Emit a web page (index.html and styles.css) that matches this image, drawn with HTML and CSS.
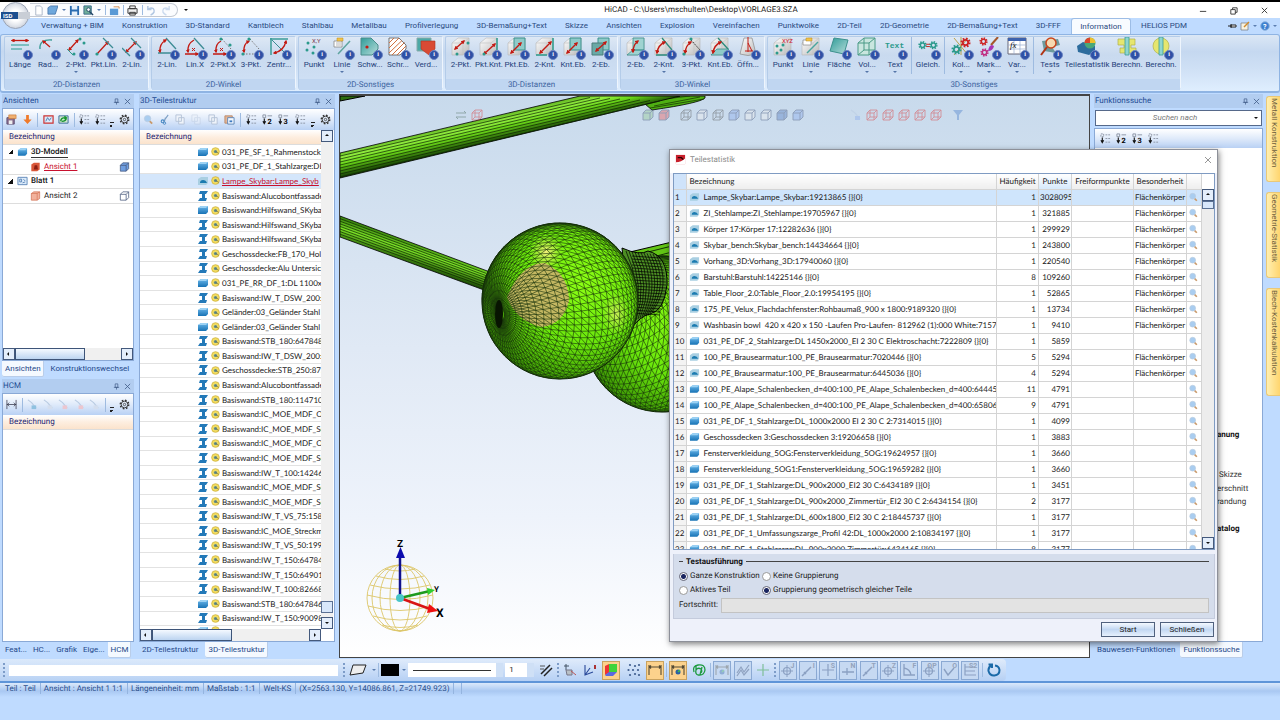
FILE: index.html
```html
<!DOCTYPE html>
<html lang="de">
<head>
<meta charset="utf-8">
<title>HiCAD</title>
<link rel="stylesheet" href="styles.css">
</head>
<body>
<svg class="defs" aria-hidden="true">
  <defs>
    <linearGradient id="g-blue" x1="0" y1="0" x2="0" y2="1"><stop offset="0" stop-color="#6bb7ea"/><stop offset="1" stop-color="#1873b5"/></linearGradient>
    <linearGradient id="g-grey" x1="0" y1="0" x2="1" y2="1"><stop offset="0" stop-color="#fff"/><stop offset="1" stop-color="#b9b9b9"/></linearGradient>
    <linearGradient id="g-teal" x1="0" y1="0" x2="1" y2="1"><stop offset="0" stop-color="#2f9c98"/><stop offset="1" stop-color="#b7dcdb"/></linearGradient>
    <marker id="ah" viewBox="0 0 6 6" refX="4" refY="3" markerWidth="3" markerHeight="3" orient="auto-start-reverse"><path d="M0 0L6 3L0 6Z" fill="#c21a12"/></marker>
  </defs>
  <symbol id="cube-g" viewBox="0 0 20 20"><path d="M1 6L7 1H18V13L12 18H1Z" fill="url(#g-grey)" stroke="#b5b5b5" stroke-width=".6"/><path d="M1 6H12V18M12 6L18 1" fill="none" stroke="#c4c4c4" stroke-width=".7"/></symbol>
  <symbol id="gear" viewBox="0 0 10 10"><circle cx="5" cy="5" r="3.6" fill="none" stroke="currentColor" stroke-width="2" stroke-dasharray="1.5 1.3"/><circle cx="5" cy="5" r="2.4" fill="none" stroke="currentColor" stroke-width="1.6"/></symbol>
  <symbol id="i-len" viewBox="0 0 20 20"><path d="M2 3.500H18" stroke="#c21a12" stroke-width="1.300" marker-start="url(#ah)" marker-end="url(#ah)"/><path d="M1 8H19M1 12H12" stroke="#5fb3b1" stroke-width="1.600"/></symbol>
  <symbol id="i-rad" viewBox="0 0 20 20"><path d="M2 12Q1 2 14 3" fill="none" stroke="#3c9c98" stroke-width="1.400"/><path d="M12 10L5 4" stroke="#c21a12" stroke-width="1.300" marker-end="url(#ah)"/></symbol>
  <symbol id="i-2pkt" viewBox="0 0 20 20"><path d="M3 13L12 3" stroke="#c21a12" stroke-width="1.300" marker-start="url(#ah)" marker-end="url(#ah)"/><circle cx="14" cy="2" r="1.500" fill="#2b9a8c"/><circle cx="18" cy="6" r="1.500" fill="#2b9a8c"/><circle cx="8" cy="17" r="1.500" fill="#2b9a8c"/><path d="M1 12L7 18" stroke="#2b9a8c"/></symbol>
  <symbol id="i-pktlin" viewBox="0 0 20 20"><path d="M3 17L14 5" stroke="#c21a12" stroke-width="1.300" marker-end="url(#ah)"/><circle cx="3" cy="17" r="1.600" fill="#2b9a8c"/><path d="M9 1L19 11" stroke="#3c8c94" stroke-width="1.300"/></symbol>
  <symbol id="i-2lin" viewBox="0 0 20 20"><path d="M4 15L14 5" stroke="#c21a12" stroke-width="1.300" marker-start="url(#ah)" marker-end="url(#ah)"/><path d="M9 1L19 11M0 11L8 19" stroke="#3c8c94" stroke-width="1.300"/></symbol>
  <symbol id="i-w2lin" viewBox="0 0 20 20"><path d="M9 1L19 12M1 16H14" stroke="#3c8c94" stroke-width="1.300"/><path d="M3 15Q2 7 9 3" fill="none" stroke="#c21a12" stroke-width="1.300" marker-start="url(#ah)" marker-end="url(#ah)"/></symbol>
  <symbol id="i-wlinx" viewBox="0 0 20 20"><path d="M9 1L19 12" stroke="#3c8c94" stroke-width="1.300"/><path d="M3 15Q2 7 9 3M0 17H13" fill="none" stroke="#c21a12" stroke-width="1.300" marker-start="url(#ah)" marker-end="url(#ah)"/><path d="M7 11L10 14M10 11L7 14" stroke="#c21a12"/></symbol>
  <symbol id="i-w2pktx" viewBox="0 0 20 20"><path d="M9 2L18 12" stroke="#777" stroke-dasharray="1.500 1.500"/><path d="M3 15Q2 7 8 4M0 17H13" fill="none" stroke="#c21a12" stroke-width="1.300" marker-start="url(#ah)" marker-end="url(#ah)"/><path d="M7 11L10 14M10 11L7 14" stroke="#c21a12"/><circle cx="8" cy="2" r="1.600" fill="#2b9a8c"/><circle cx="17" cy="8" r="1.600" fill="#2b9a8c"/></symbol>
  <symbol id="i-w3pkt" viewBox="0 0 20 20"><path d="M9 2L18 12M2 17H13" stroke="#777" stroke-dasharray="1.500 1.500"/><path d="M3 15Q2 7 8 4" fill="none" stroke="#c21a12" stroke-width="1.300" marker-start="url(#ah)" marker-end="url(#ah)"/><circle cx="8" cy="2" r="1.600" fill="#2b9a8c"/><circle cx="2" cy="17" r="1.600" fill="#2b9a8c"/></symbol>
  <symbol id="i-zentr" viewBox="0 0 20 20"><path d="M1 2H19M2 1V18" stroke="#3c9c98" stroke-width="1.500"/><path d="M3 3L16 16" stroke="#3c8c94"/><path d="M5 16Q15 14 17 4" fill="none" stroke="#c21a12" stroke-width="1.300" marker-start="url(#ah)" marker-end="url(#ah)"/></symbol>
  <symbol id="i-punkt" viewBox="0 0 20 20"><g fill="#2b9a8c"><circle cx="4" cy="6" r="1.500"/><circle cx="10" cy="10" r="1.500"/><circle cx="3" cy="13" r="1.500"/><circle cx="9" cy="16" r="1.500"/></g></symbol>
  <symbol id="i-linie" viewBox="0 0 20 20"><path d="M6 17L18 4" stroke="#5fa5a0" stroke-width="1.500"/><path d="M2 4H10V10H2Z" fill="#fff" stroke="#888" stroke-width=".8"/><path d="M4 6H9M4 8H9" stroke="#999" stroke-width=".7"/><path d="M5 1H11V4H5Z" fill="#f2c34b" stroke="#b48a20" stroke-width=".5"/></symbol>
  <symbol id="i-schw" viewBox="0 0 20 20"><path d="M1 1H11L18 8V12L12 18H1Z" fill="url(#g-teal)" stroke="#4a8d8c"/><circle cx="7" cy="10" r="1.600" fill="#c21a12"/></symbol>
  <symbol id="i-schr" viewBox="0 0 20 20"><path d="M1 1H11L18 8V12L12 18H1Z" fill="#fff" stroke="#555" stroke-width=".8"/><path d="M1 6L6 1M1 11L11 1M1 16L14 3.500M4 18L16.500 5.500M9 18L18 9" stroke="#cf7040"/></symbol>
  <symbol id="i-verd" viewBox="0 0 20 20"><path d="M1 1H15V14H1Z" fill="#4ca9a6" stroke="#8aa"/><path d="M5 4H19V12L13 18L5 12Z" fill="#d94a34" stroke="#ad3322" stroke-width=".6"/></symbol>
  <symbol id="i-c2pkt" viewBox="0 0 20 20"><use href="#cube-g"/><path d="M4 12L13 4" stroke="#c21a12" stroke-width="1.400" marker-start="url(#ah)" marker-end="url(#ah)"/><circle cx="17" cy="6" r="1.500" fill="#2b9a8c"/><circle cx="6" cy="17" r="1.500" fill="#2b9a8c"/></symbol>
  <symbol id="i-cpk" viewBox="0 0 20 20"><use href="#cube-g"/><path d="M18 1V13" stroke="#2b9a8c" stroke-width="1.500"/><path d="M5 17L16 7" stroke="#c21a12" stroke-width="1.400" marker-start="url(#ah)" marker-end="url(#ah)"/><circle cx="5" cy="17" r="1.500" fill="#2b9a8c"/></symbol>
  <symbol id="i-cpe" viewBox="0 0 20 20"><use href="#cube-g"/><path d="M7 1H18V13H7Z" fill="#8fcac8" stroke="#3d918e"/><path d="M4 16L14 6" stroke="#c21a12" stroke-width="1.400" marker-start="url(#ah)" marker-end="url(#ah)"/></symbol>
  <symbol id="i-c2k" viewBox="0 0 20 20"><use href="#cube-g"/><path d="M18 1V13M1 18H12" stroke="#2b9a8c" stroke-width="1.500"/><path d="M5 16L16 5" stroke="#c21a12" stroke-width="1.400" marker-start="url(#ah)" marker-end="url(#ah)"/></symbol>
  <symbol id="i-c2e" viewBox="0 0 20 20"><path d="M7 1H18V13H7Z" fill="#8fcac8" stroke="#3d918e"/><path d="M1 6H12V18H1Z" fill="#6aa9a6" stroke="#4d7d7b"/><path d="M5 14L15 5" stroke="#c21a12" stroke-width="1.400" marker-start="url(#ah)" marker-end="url(#ah)"/></symbol>
  <symbol id="i-a2e" viewBox="0 0 20 20"><use href="#cube-g"/><path d="M7 1H18V13H7ZM1 18L7 13H18L12 18Z" fill="#9fd3d1" stroke="#3d918e" stroke-width=".8"/><path d="M7 15Q7 8 12 4" fill="none" stroke="#c21a12" stroke-width="1.400" marker-start="url(#ah)" marker-end="url(#ah)"/></symbol>
  <symbol id="i-a2k" viewBox="0 0 20 20"><use href="#cube-g"/><path d="M8 1L18 13M2 18H14" stroke="#2b8a7c" stroke-width="1.300"/><path d="M3 16Q4 8 11 5" fill="none" stroke="#c21a12" stroke-width="1.400" marker-start="url(#ah)" marker-end="url(#ah)"/></symbol>
  <symbol id="i-a3p" viewBox="0 0 20 20"><use href="#cube-g"/><path d="M9 3L18 13" stroke="#333" stroke-dasharray="1.500 1"/><path d="M3 16Q4 8 9 5" fill="none" stroke="#c21a12" stroke-width="1.400" marker-start="url(#ah)" marker-end="url(#ah)"/><circle cx="9" cy="2" r="1.600" fill="#2b9a8c"/><circle cx="2" cy="17" r="1.600" fill="#2b9a8c"/></symbol>
  <symbol id="i-ake" viewBox="0 0 20 20"><use href="#cube-g"/><path d="M1 18L7 12H19L13 18Z" fill="#8fcac8" stroke="#3d918e" stroke-width=".8"/><path d="M8 1L18 12" stroke="#2b8a7c" stroke-width="1.300"/><path d="M3 16Q4 8 11 5" fill="none" stroke="#c21a12" stroke-width="1.400" marker-start="url(#ah)" marker-end="url(#ah)"/></symbol>
  <symbol id="i-oeff" viewBox="0 0 20 20"><path d="M6 1H14L18 17Q10 20 2 17Z" fill="url(#g-grey)" stroke="#888" stroke-width=".7"/><path d="M10 0V15M10 6L14 14M7 14H15" stroke="#c21a12" fill="none"/></symbol>
  <symbol id="i-p3" viewBox="0 0 20 20"><use href="#cube-g"/><g fill="#2b9a8c"><circle cx="4" cy="9" r="1.500"/><circle cx="8" cy="13" r="1.500"/><circle cx="4" cy="16" r="1.500"/><circle cx="10" cy="8" r="1.500"/></g></symbol>
  <symbol id="i-l3" viewBox="0 0 20 20"><use href="#cube-g"/><path d="M6 16L17 5" stroke="#4aa59f" stroke-width="1.500"/><path d="M2 3H10V8H2Z" fill="#fff" stroke="#888" stroke-width=".7"/><path d="M5 1H11V4H5Z" fill="#f2c34b" stroke="#b48a20" stroke-width=".5"/></symbol>
  <symbol id="i-fl" viewBox="0 0 20 20"><path d="M5 1L19 3L15 17L1 14Z" fill="url(#g-teal)" stroke="#3d918e"/></symbol>
  <symbol id="i-vol" viewBox="0 0 20 20"><path d="M1 6L7 1H18V13L12 18H1Z" fill="#c9e6df" stroke="#4a9a86"/><path d="M1 6H12V18M12 6L18 1M7 1V13H18M7 13L1 18" fill="none" stroke="#4a9a86"/></symbol>
  <symbol id="i-gl" viewBox="0 0 22 20"><use href="#gear" x="0" y="3" width="10" height="10" color="#2b9a8c"/><use href="#gear" x="12" y="3" width="10" height="10" color="#2b9a8c"/><path d="M9 7H13M9 9.500H13" stroke="#c21a12"/></symbol>
  <symbol id="i-kol" viewBox="0 0 20 20"><path d="M3 1L17 18M17 1L3 18M10 0V18" stroke="#b9a24b"/><use href="#gear" x="9" y="0" width="11" height="11" color="#cc2424"/><use href="#gear" x="0" y="7" width="11" height="11" color="#2b9a8c"/></symbol>
  <symbol id="i-mark" viewBox="0 0 20 20"><use href="#gear" x="0" y="0" width="9" height="9" color="#cc2424"/><use href="#gear" x="1" y="11" width="9" height="9" color="#c02a80"/><path d="M19 0L12 8" stroke="#a4572a" stroke-width="2"/><path d="M13 8Q10 8 9 14Q14 14 15 9Z" fill="#a735b5"/></symbol>
  <symbol id="i-var" viewBox="0 0 20 20"><path d="M1 1H19V17H1Z" fill="#fff" stroke="#667"/><path d="M1 1H19V4H1Z" fill="#3d62ad"/><path d="M1 8H19M1 12H19M7 4V17M13 4V17" stroke="#9aaed0" stroke-width=".7"/></symbol>
  <symbol id="i-test" viewBox="0 0 20 20"><path d="M2 4L18 2L20 8L12 10L16 16L4 14Z" fill="#6c9a9c"/><circle cx="11" cy="6" r="5" fill="#f5d9b0" stroke="#c8451a" stroke-width="1.500"/><path d="M7 10L1 18" stroke="#b03414" stroke-width="2"/></symbol>
  <symbol id="i-stat" viewBox="0 0 20 20"><path d="M0 9L6 5L18 9V14L12 18L1 15Z" fill="#2d6c9d"/><circle cx="13" cy="6" r="5.500" fill="#4aa877"/><path d="M13 6V.5A5.500 5.500 0 0 1 18.500 6Z" fill="#f0c02c"/><path d="M13 6H7.500A5.500 5.500 0 0 1 13 .5Z" fill="#d9452a"/></symbol>
  <symbol id="i-ber1" viewBox="0 0 20 20"><path d="M1 2H18V8H14V11H19V16H3V11H7V8H1Z" fill="#e6e66e" stroke="#b0b04a" stroke-width=".7"/><path d="M8 0H12V18H8Z" fill="#8fd6cf" stroke="#3d9d95" stroke-width=".8"/></symbol>
  <symbol id="i-ber2" viewBox="0 0 20 20"><circle cx="10" cy="9" r="8" fill="#e6e66e" stroke="#b0b04a" stroke-width=".7"/><path d="M8 0H12V18H8Z" fill="#8fd6cf" stroke="#3d9d95" stroke-width=".8"/></symbol>

  <symbol id="s-box" viewBox="0 0 12 10"><path d="M1 3L4 1H11V7L9 9H1Z" fill="url(#g-blue)"/><path d="M1 3L4 1H11L9 3Z" fill="#9cd2f4"/></symbol>
  <symbol id="s-beam" viewBox="0 0 12 10"><path d="M3 0H11L9 3H8V7H10L9 10H1L3 7H5V3H2Z" fill="#2379b8"/></symbol>
  <symbol id="s-surf" viewBox="0 0 12 10"><path d="M1 3L4 1H11V7L9 9H1Z" fill="#a9cfe2"/><path d="M3 7Q3 4 6 4T10 7Z" fill="#1b7bb0"/></symbol>
  <symbol id="s-eye" viewBox="0 0 10 10"><circle cx="5" cy="5" r="4.300" fill="#f1dc62" stroke="#c9a92b" stroke-width=".7"/><circle cx="5" cy="5" r="1.800" fill="#5b8a90"/><path d="M5 5L8.500 7" stroke="#6b6b3a" stroke-width=".8"/></symbol>
  <symbol id="s-doc" viewBox="0 0 12 10"><path d="M1 1H11V9H1Z" fill="#dcebfa" stroke="#5c86b8"/><path d="M3 3H5V6H3ZM7 3L9 5M6 7L9 6" fill="none" stroke="#3d6ea8" stroke-width=".8"/></symbol>
  <symbol id="s-red" viewBox="0 0 12 12"><path d="M1 3L4 1H11V9L8 11H1Z" fill="#d9573a"/><path d="M4 9L5 4H8L9 9Z" fill="#8c1f14"/></symbol>
  <symbol id="s-red2" viewBox="0 0 12 12"><path d="M1 3L4 1H11V9L8 11H1Z" fill="#f2b29c" stroke="#cf6a4c" stroke-width=".8"/><path d="M1 3H8V11M8 3L11 1" fill="none" stroke="#cf6a4c" stroke-width=".7"/></symbol>
  <symbol id="s-cube" viewBox="0 0 12 12"><path d="M1 4L4 1H11V8L8 11H1Z" fill="currentColor" stroke="#46567a" stroke-width=".9"/><path d="M1 4H8V11M8 4L11 1" fill="none" stroke="#46567a" stroke-width=".9"/></symbol>
  <symbol id="s-wire" viewBox="0 0 12 12"><path d="M1 4L4 1H11V8L8 11H1ZM1 4H8V11M8 4L11 1M4 1V8H11M4 8L1 11" fill="none" stroke="currentColor" stroke-width=".9"/></symbol>
  <symbol id="s-tree" viewBox="0 0 12 12"><path d="M1 1H4V4H1ZM6 2H11M6 6H11M6 10H11" fill="none" stroke="#8a93a3" stroke-width="1" stroke-dasharray="2 1"/><path d="M2.500 5V10M1 8L2.500 10.500L4 8" fill="none" stroke="#111" stroke-width="1.200"/></symbol>
  <symbol id="s-lvl" viewBox="0 0 12 12"><path d="M1 1H4V4H1ZM6 2H11" fill="none" stroke="#8a93a3"/><path d="M2.500 5V10M1 8L2.500 10.500L4 8" fill="none" stroke="#111" stroke-width="1.200"/></symbol>
  <symbol id="s-cog" viewBox="0 0 12 12"><circle cx="6" cy="6" r="4.600" fill="none" stroke="#333" stroke-width="1.600" stroke-dasharray="1.800 1.810"/><circle cx="6" cy="6" r="3.600" fill="none" stroke="#333" stroke-width="1"/><circle cx="6" cy="6" r="1.300" fill="none" stroke="#333" stroke-width=".8"/></symbol>
  <symbol id="s-save" viewBox="0 0 12 12"><path d="M1 4H9V11H1Z" fill="#8a6d8d" stroke="#5b4e74"/><path d="M3 1H11V5H3Z" fill="#f0b070" stroke="#ca7a3a" stroke-width=".7"/><path d="M3 7H7V11H3Z" fill="#eee"/></symbol>
  <symbol id="s-down" viewBox="0 0 12 12"><path d="M4.500 1H7.500V6H10.500L6 11L1.500 6H4.500Z" fill="#f07a2a"/></symbol>
  <symbol id="s-frame" viewBox="0 0 12 12"><path d="M1 2H11V10H1Z" fill="#dcebfa" stroke="#c33" stroke-width="1.300"/><path d="M3 8L5 4L7 7L9 4" fill="none" stroke="#4a7ab0"/></symbol>
  <symbol id="s-reload" viewBox="0 0 12 12"><path d="M1 2H11V10H1Z" fill="#cfe7cf" stroke="#3a6a9a"/><path d="M3 8Q3 4 8 4M9 4Q9 8 4 8M7 2.500L9 4L7 5.500" fill="none" stroke="#16932e" stroke-width="1.500"/></symbol>
  <symbol id="s-mag" viewBox="0 0 12 12"><path d="M6.500 7L10 10.500" stroke="#c99a6b" stroke-width="2"/><circle cx="5" cy="5" r="3.500" fill="#a9cdf0" stroke="#b9cbe0" stroke-width=".8"/></symbol>
  <symbol id="s-cut" viewBox="0 0 12 12"><path d="M10 1L5 8M7 4L6 8" stroke="#7d9fc4" stroke-width="1.200"/><circle cx="4" cy="8" r="1.600" fill="none" stroke="#4a8ac4" stroke-width="1.200"/><circle cx="6" cy="10" r="1.300" fill="none" stroke="#4a8ac4"/></symbol>
  <symbol id="s-copy" viewBox="0 0 12 12"><path d="M1 1H7V8H1ZM4 4H10V11H4Z" fill="#eef3fa" stroke="#b4c2d6"/></symbol>
  <symbol id="s-paste" viewBox="0 0 12 12"><path d="M1 2H9V10H1Z" fill="#e3b596" stroke="#b98a6a"/><path d="M4 4H11V11H4Z" fill="#f3f8ff" stroke="#5c86b8"/><path d="M6 7H9V9H6Z" fill="#3d7ac0"/></symbol>
  <symbol id="s-dim" viewBox="0 0 12 12"><path d="M1 1V11M11 1V11M1 6H11M3.500 4L1.500 6L3.500 8M8.500 4L10.500 6L8.500 8" fill="none" stroke="#334" stroke-width=".8"/></symbol>
  <symbol id="s-ghost" viewBox="0 0 12 12"><path d="M1 1L5 4L10 10" fill="none" stroke="#b9cbe2" stroke-width="1.200"/><path d="M5 7H10V11H5Z" fill="currentColor"/></symbol>
  <symbol id="s-pin" viewBox="0 0 8 8"><path d="M2.500 1H5.500V5H2.500ZM1 5H7M4 5V7.500" fill="none" stroke="#3f5a86" stroke-width=".8"/></symbol>
  <symbol id="s-x" viewBox="0 0 8 8"><path d="M1 1L7 7M7 1L1 7" fill="none" stroke="currentColor" stroke-width=".9"/></symbol>

  <symbol id="b-dots" viewBox="0 0 14 14"><g fill="#3f5d8f"><circle cx="3" cy="2" r="1.100"/><circle cx="8" cy="3" r="1.100"/><circle cx="12" cy="2" r="1.100"/><circle cx="1.500" cy="7" r="1.100"/><circle cx="6" cy="7" r="1.100"/><circle cx="11" cy="7" r="1.100"/><circle cx="3" cy="12" r="1.100"/><circle cx="8" cy="11" r="1.100"/><circle cx="12" cy="12" r="1.100"/></g></symbol>
  <symbol id="b-meas" viewBox="0 0 14 14"><path d="M1 2V12M13 2V12M1 4H13M3 2.500L1.500 4L3 5.500M11 2.500L12.500 4L11 5.500" fill="none" stroke="currentColor" stroke-width="1.100"/></symbol>
  <symbol id="b-meas2" viewBox="0 0 14 14"><use href="#b-meas"/><circle cx="7" cy="9" r="2.500" fill="#2a5fa5"/><path d="M7 9L9 7" stroke="#3fbf4a" stroke-width="1.500"/></symbol>
  <symbol id="b-spiral" viewBox="0 0 14 14"><path d="M2 9Q0 3 6 2Q13 1 13 7Q12 13 6 12Q3 11 4 7Q6 4 9 6Q11 9 8 10M4 2V7M8 12L10 4" fill="none" stroke="#1c9a3e" stroke-width="1.300"/></symbol>
  <symbol id="b-zig" viewBox="0 0 14 14"><path d="M1 10L5 4L8 9L13 2M1 13L5 7L8 12L13 6" fill="none" stroke="#8fa2c0" stroke-width="1.200"/></symbol>
  <symbol id="b-cross" viewBox="0 0 14 14"><path d="M7 1V13M1 7H13" stroke="currentColor" stroke-width="1.200"/></symbol>
  <symbol id="b-ctr" viewBox="0 0 14 14"><circle cx="6" cy="8" r="3.500" fill="none" stroke="#8ba0c2" stroke-width="1.200"/><path d="M6 2V14M0 8H12" stroke="#8ba0c2"/></symbol>
  <symbol id="b-diag" viewBox="0 0 14 14"><path d="M1 13L10 4M3 9L5 11" stroke="#8ba0c2" stroke-width="1.500"/></symbol>
  <symbol id="b-mid" viewBox="0 0 14 14"><path d="M1 9H13M6 5V12" stroke="#8ba0c2" stroke-width="1.300"/></symbol>
  <symbol id="b-perp" viewBox="0 0 14 14"><path d="M2 1V12H13M2 5Q8 6 9 12" fill="none" stroke="#8ba0c2" stroke-width="1.300"/></symbol>
  <symbol id="b-v" viewBox="0 0 14 14"><path d="M1 6L5 12L11 5" fill="none" stroke="#8ba0c2" stroke-width="1.400"/></symbol>
  <symbol id="b-grid" viewBox="0 0 14 14"><path d="M2 1V12H13M2 4H12M2 8H12" fill="none" stroke="#8ba0c2" stroke-width="1.200"/></symbol>
</svg>

<header class="titlebar">
  <button class="appbtn" aria-label="HiCAD"><span>ISD</span></button>
  <div class="quick">
    <button aria-label="Neu"><svg viewBox="0 0 12 12"><path d="M3 1H8L10 3V11H3Z" fill="#fff" stroke="#a8b4c6"/></svg></button>
    <button aria-label="Öffnen"><svg viewBox="0 0 12 12"><path d="M1 3L4 1H12L9 10H1Z" fill="#6fa8dc" stroke="#3c6ea5" stroke-width=".8"/></svg></button>
    <i class="arr"></i>
    <button aria-label="Speichern"><svg viewBox="0 0 12 12"><path d="M1 1H11V11H1Z" fill="#2b6cb0"/><path d="M3 1H9V5H3ZM3 7H9V11H3Z" fill="#e6f0fa"/></svg></button>
    <button aria-label="Suchen"><svg viewBox="0 0 12 12"><path d="M1 1H9V10H1Z" fill="#6fae9a" stroke="#3a6a8a"/><circle cx="6" cy="5" r="2" fill="#fff" stroke="#246"/><path d="M7 7L11 11" stroke="#246" stroke-width="1.500"/></svg></button>
    <i class="arr"></i><i class="sep"></i>
    <button aria-label="Referenz"><svg viewBox="0 0 12 12"><path d="M1 4H10V11H1Z" fill="#5b9ad5"/><path d="M5 2H11V4" fill="none" stroke="#d08a4a"/></svg></button>
    <i class="sep"></i>
    <button aria-label="Drucken"><svg viewBox="0 0 12 12"><path d="M3 1H9V4H3ZM1 4H11V9H1ZM3 8H9V11H3Z" fill="#eee" stroke="#333"/></svg></button>
    <i class="sep"></i>
    <button aria-label="Rückgängig"><svg viewBox="0 0 12 12"><path d="M5 11Q11 8 8 4Q5 2 2 5M2 1V5H6" fill="none" stroke="#b0c6e2" stroke-width="1.600"/></svg></button>
    <button aria-label="Wiederholen"><svg viewBox="0 0 12 12"><path d="M7 11Q1 8 4 4Q7 2 10 5M10 1V5H6" fill="none" stroke="#cbdaee" stroke-width="1.600"/></svg></button>
  </div>
  <i class="arr dark"></i>
  <h1>HiCAD - C:\Users\mschulten\Desktop\VORLAGE3.SZA</h1>
  <div class="winbtns">
    <button aria-label="Minimieren"><svg viewBox="0 0 10 10"><path d="M1 6H8" stroke="#333"/></svg></button>
    <button aria-label="Verkleinern"><svg viewBox="0 0 10 10"><path d="M2 4H7V9H2ZM4 4V2H9V7H7" fill="none" stroke="#333"/></svg></button>
    <button aria-label="Schließen"><svg viewBox="0 0 10 10"><path d="M2 2L8 8M8 2L2 8" stroke="#333"/></svg></button>
  </div>
</header>

<nav class="tabs">
  <div class="tablist">
    <button>Verwaltung + BIM</button><button>Konstruktion</button><button>3D-Standard</button><button>Kantblech</button><button>Stahlbau</button><button>Metallbau</button><button>Profilverlegung</button><button>3D-Bemaßung+Text</button><button>Skizze</button><button>Ansichten</button><button>Explosion</button><button>Vereinfachen</button><button>Punktwolke</button><button>2D-Teil</button><button>2D-Geometrie</button><button>2D-Bemaßung+Text</button><button>3D-FFF</button><button class="on">Information</button><button>HELiOS PDM</button>
  </div>
  <div class="tabtools">
    <svg viewBox="0 0 10 10"><path d="M1 5H4M4 3V7M4 4H9V6H4Z" fill="#fff" stroke="#222"/></svg>
    <svg viewBox="0 0 10 10"><path d="M1 2H8V9H1Z" fill="#f6f2e2" stroke="#777" stroke-width=".7"/><path d="M9 1L4 6" stroke="#d08a2a" stroke-width="1.500"/></svg><i class="arr"></i>
    <svg viewBox="0 0 10 10"><circle cx="5" cy="5" r="4.300" fill="#3d7fd0" stroke="#8fb3de"/><text x="3" y="8" font-size="7" font-weight="bold" fill="#fff">?</text></svg><i class="arr"></i>
  </div>
</nav>

<section class="ribbon">
  <div class="group"><div class="btns">
    <button><svg><use href="#i-len"/></svg>Länge</button><button><svg><use href="#i-rad"/></svg>Rad...</button><button class="dd"><svg><use href="#i-2pkt"/></svg>2-Pkt.</button><button><svg><use href="#i-pktlin"/></svg>Pkt.Lin.</button><button><svg><use href="#i-2lin"/></svg>2-Lin.</button>
  </div><h2>2D-Distanzen</h2></div>
  <div class="group"><div class="btns">
    <button><svg><use href="#i-w2lin"/></svg>2-Lin.</button><button><svg><use href="#i-wlinx"/></svg>Lin.X</button><button><svg><use href="#i-w2pktx"/></svg>2-Pkt.X</button><button><svg><use href="#i-w3pkt"/></svg>3-Pkt.</button><button><svg><use href="#i-zentr"/></svg>Zentr...</button>
  </div><h2>2D-Winkel</h2></div>
  <div class="group"><div class="btns">
    <button><svg viewBox="0 0 20 20"><use href="#i-punkt"/><text x="8" y="6" font-size="6" fill="#7a3a50">X,Y</text></svg>Punkt</button><button class="dd"><svg><use href="#i-linie"/></svg>Linie</button><button><svg><use href="#i-schw"/></svg>Schw...</button><button><svg><use href="#i-schr"/></svg>Schr...</button><button><svg><use href="#i-verd"/></svg>Verd...</button>
  </div><h2>2D-Sonstiges</h2></div>
  <div class="group"><div class="btns">
    <button><svg><use href="#i-c2pkt"/></svg>2-Pkt.</button><button><svg><use href="#i-cpk"/></svg>Pkt.Knt.</button><button><svg><use href="#i-cpe"/></svg>Pkt.Eb.</button><button><svg><use href="#i-c2k"/></svg>2-Knt.</button><button><svg><use href="#i-cpe"/></svg>Knt.Eb.</button><button><svg><use href="#i-c2e"/></svg>2-Eb.</button>
  </div><h2>3D-Distanzen</h2></div>
  <div class="group"><div class="btns">
    <button><svg><use href="#i-a2e"/></svg>2-Eb.</button><button class="dd"><svg><use href="#i-a2k"/></svg>2-Knt.</button><button><svg><use href="#i-a3p"/></svg>3-Pkt.</button><button><svg><use href="#i-ake"/></svg>Knt.Eb.</button><button><svg><use href="#i-oeff"/></svg>Öffn...</button>
  </div><h2>3D-Winkel</h2></div>
  <div class="group"><div class="btns">
    <button><svg viewBox="0 0 20 20"><use href="#i-p3"/><text x="9" y="6" font-size="6" fill="#c23">XYZ</text></svg>Punkt</button><button class="dd"><svg><use href="#i-l3"/></svg>Linie</button><button><svg><use href="#i-fl"/></svg>Fläche</button><button class="dd"><svg><use href="#i-vol"/></svg>Vol...</button><button class="dd"><svg viewBox="0 0 20 20"><text class="mono" x="0" y="11" font-size="8" font-weight="bold" fill="#2b9a8c">Text</text></svg>Text</button>
    <i class="sep"></i><button><svg><use href="#i-gl"/></svg>Gleich.</button><i class="sep"></i>
    <button class="dd"><svg><use href="#i-kol"/></svg>Kol...</button><button class="dd"><svg><use href="#i-mark"/></svg>Mark...</button><button class="dd"><svg viewBox="0 0 20 20"><use href="#i-var"/><text class="serif" x="3" y="11" font-size="9" font-style="italic" fill="#111">fx</text></svg>Var...</button>
    <i class="sep"></i><button class="dd"><svg><use href="#i-test"/></svg>Tests</button><button class="w3"><svg><use href="#i-stat"/></svg>Teilestatistik</button><button class="w2"><svg><use href="#i-ber1"/></svg>Berechn.</button><button class="w2"><svg><use href="#i-ber2"/></svg>Berechn.</button>
  </div><h2>3D-Sonstiges</h2></div>
</section>

<main>
  <div class="col left">
    <section class="panel">
      <h3>Ansichten<svg><use href="#s-pin"/></svg><svg><use href="#s-x"/></svg></h3>
      <div class="box">
        <div class="tools"><svg><use href="#s-save"/></svg><svg><use href="#s-down"/></svg><i class="sep"></i><svg><use href="#s-frame"/></svg><svg><use href="#s-reload"/></svg><i class="sep"></i><svg><use href="#s-tree"/></svg><svg><use href="#s-tree"/></svg><i class="more"></i><svg><use href="#s-cog"/></svg></div>
        <div class="head">Bezeichnung</div>
        <ul class="views">
          <li><i class="exp"></i><svg><use href="#s-box"/></svg><b class="u">3D-Modell</b></li>
          <li class="sub"><svg><use href="#s-red"/></svg><a href="#" class="cur">Ansicht 1</a><svg class="end blue"><use href="#s-cube"/></svg></li>
          <li><i class="exp"></i><svg><use href="#s-doc"/></svg><b>Blatt 1</b></li>
          <li class="sub"><svg><use href="#s-red2"/></svg><span>Ansicht 2</span><svg class="end"><use href="#s-cube"/></svg></li>
        </ul>
        <div class="hbar"><button class="l" aria-label="Links"></button><span class="thumb"></span><button class="r" aria-label="Rechts"></button></div>
      </div>
      <div class="foot"><button class="on">Ansichten</button><button>Konstruktionswechsel</button></div>
    </section>
    <section class="panel">
      <h3>HCM<svg><use href="#s-pin"/></svg><svg><use href="#s-x"/></svg></h3>
      <div class="box">
        <div class="tools"><svg><use href="#s-dim"/></svg><i class="sep"></i><svg class="c1"><use href="#s-ghost"/></svg><svg class="c2"><use href="#s-ghost"/></svg><svg class="c3"><use href="#s-ghost"/></svg><svg class="c3"><use href="#s-ghost"/></svg><svg class="c2"><use href="#s-ghost"/></svg><i class="sep"></i><i class="more"></i><svg><use href="#s-cog"/></svg></div>
        <div class="head">Bezeichnung</div>
      </div>
      <div class="foot tight"><button>Feat...</button><button>HC...</button><button>Grafik</button><button>Eige...</button><button class="on">HCM</button></div>
    </section>
  </div>

  <section class="panel parts">
    <h3>3D-Teilestruktur<svg><use href="#s-pin"/></svg><svg><use href="#s-x"/></svg></h3>
    <div class="box">
      <div class="tools"><svg><use href="#s-mag"/></svg><svg><use href="#s-cut"/></svg><svg><use href="#s-copy"/></svg><svg class="dim"><use href="#s-copy"/></svg><svg><use href="#s-copy"/></svg><svg><use href="#s-paste"/></svg><i class="sep"></i><svg><use href="#s-tree"/></svg><svg viewBox="0 0 12 12"><use href="#s-lvl"/><text x="6" y="11" font-size="8" font-weight="bold">2</text></svg><svg viewBox="0 0 12 12"><use href="#s-lvl"/><text x="6" y="11" font-size="8" font-weight="bold">3</text></svg><svg><use href="#s-tree"/></svg><i class="more"></i><svg><use href="#s-cog"/></svg></div>
      <div class="scrollwrap">
        <div class="listcol"><div class="head">Bezeichnung</div><ul class="tree" id="tree"></ul></div>
        <div class="vbar"><button class="t" aria-label="Hoch"></button><span class="gap"></span><span class="thumb"></span><button class="b" aria-label="Runter"></button></div>
      </div>
      <div class="hbar"><button class="l" aria-label="Links"></button><span class="thumb"></span><button class="r" aria-label="Rechts"></button></div>
    </div>
    <div class="foot"><button>2D-Teilestruktur</button><button class="on">3D-Teilestruktur</button></div>
  </section>

  <section class="view">
    <svg class="scene" viewBox="340 96 750 562" id="scene">
      <defs>
        <linearGradient id="rod1" gradientUnits="userSpaceOnUse" x1="455" y1="122" x2="461" y2="148"><stop offset="0" stop-color="#4c9a14"/><stop offset=".35" stop-color="#93f040"/><stop offset=".6" stop-color="#68d418"/><stop offset="1" stop-color="#1e4e06"/></linearGradient>
        <linearGradient id="rod2" gradientUnits="userSpaceOnUse" x1="414" y1="242" x2="407" y2="264"><stop offset="0" stop-color="#3c8a0e"/><stop offset=".4" stop-color="#7be326"/><stop offset="1" stop-color="#1e4e06"/></linearGradient>
        <radialGradient id="ball" cx=".64" cy=".38" r=".78"><stop offset="0" stop-color="#8cff14"/><stop offset=".5" stop-color="#6be80c"/><stop offset="1" stop-color="#2c7a02"/></radialGradient>
        <radialGradient id="shine"><stop offset="0" stop-color="#f6ef7c"/><stop offset="1" stop-color="#c8f04a" stop-opacity="0"/></radialGradient>
      </defs>
      <path d="M340 96H365L340 101Z" fill="#2d6f10" stroke="#000"/>
      <path d="M645 104L655 96H705V98Q700 103 652 110Z" fill="#4fb012" stroke="#000" stroke-width=".8"/>
      <path d="M654 106L700 97M650 108L704 99M656 100L690 96" stroke="#1a3c04" fill="none" stroke-width=".8"/>
      <path d="M340 153L580 96H680L340 178Z" fill="url(#rod1)" stroke="#000" stroke-width=".8"/>
      <path d="M340 216L490 272L484 290L340 237Z" fill="url(#rod2)" stroke="#000" stroke-width=".8"/>
      <g id="rods" stroke="#0d2402" stroke-width=".7" fill="none"></g>
      <path d="M630 252L672 242V318H640Z" fill="#62c516" stroke="#000"/>
      <path d="M640 254L672 246M645 259L672 252M655 268L672 264M655 300L672 304M650 310L672 313" stroke="#143303"/>
      <circle cx="662" cy="334" r="78" fill="url(#ball)" stroke="#0b1f02"/>
      <path id="mesh2" fill="none" stroke="#16300a" stroke-width=".6"/>
      <path d="M622 248Q640 256 648 251Q668 256 667 285Q664 311 650 314Q640 316 630 330Z" fill="#4d8f24" stroke="#000"/>
      <path id="neck" fill="none" stroke="#000" stroke-width=".7"/>
      <circle cx="560" cy="301" r="78" fill="url(#ball)" stroke="#0b1f02"/>
      <ellipse cx="546" cy="252" rx="17" ry="18" fill="url(#shine)"/>
      <ellipse cx="616" cy="314" rx="14" ry="22" fill="url(#shine)" opacity=".7"/>
      <path d="M507 297Q522 262 545 263Q569 274 569 301Q563 325 541 327Q515 320 507 297Z" fill="#c4b862"/>
      <path id="mesh1" fill="none" stroke="#16300a" stroke-width=".6"/>
      <ellipse cx="499" cy="314" rx="4" ry="14" fill="#081402"/>
      <g fill="none" stroke="#dcc66a" stroke-width=".9"><circle cx="400" cy="598" r="33"/><ellipse cx="400" cy="598" rx="10" ry="33"/><ellipse cx="400" cy="598" rx="20" ry="33"/><ellipse cx="400" cy="598" rx="28" ry="33"/><path d="M385 569Q400 573 415 569M376 576Q400 583 424 576M370 585Q400 593 430 585M367 595Q400 604 433 595M368 606Q400 615 432 606M373 616Q400 624 427 616M382 625Q400 630 418 625"/></g>
      <path d="M400 598V556" stroke="#10108c" stroke-width="2.500"/><path d="M400.500 547L396 558H405Z" fill="#0c0cae"/>
      <path d="M400 598L430 591" stroke="#1e9a1e" stroke-width="2.500"/><path d="M427 588L435 590L428 595Z" fill="#2fce2f"/>
      <path d="M400 598L430 609" stroke="#d81414" stroke-width="2.500"/><path d="M429 604L438 611L427 613Z" fill="#ee1010"/>
      <circle cx="400" cy="598" r="4" fill="#48c6c8"/>
      <g font-weight="bold" fill="#000"><text x="397" y="547" font-size="10">Z</text><text x="434" y="592" font-size="8">Y</text><text x="436" y="617" font-size="12">X</text></g>
    </svg>
    <div class="viewtools">
      <svg viewBox="0 0 12 12"><path d="M1 4H11L9 2M11 8H1L3 10" fill="none" stroke="#4a6a5a"/></svg><svg class="red"><use href="#s-wire"/></svg><i></i>
      <svg class="green"><use href="#s-cube"/></svg><svg class="redf"><use href="#s-cube"/></svg><i class="s"></i>
      <svg><use href="#s-wire"/></svg><svg class="wh"><use href="#s-cube"/></svg><svg><use href="#s-wire"/></svg><svg class="bl"><use href="#s-cube"/></svg><svg class="wh"><use href="#s-cube"/></svg><svg class="wh"><use href="#s-cube"/></svg><svg class="bl2"><use href="#s-cube"/></svg><svg class="bl"><use href="#s-cube"/></svg><i class="m"></i>
      <svg class="bl"><use href="#s-ghost"/></svg><svg class="red"><use href="#s-wire"/></svg><svg class="red"><use href="#s-wire"/></svg><svg class="red"><use href="#s-wire"/></svg><svg class="red"><use href="#s-wire"/></svg><svg class="red"><use href="#s-wire"/></svg><i class="s"></i>
      <svg viewBox="0 0 12 12"><path d="M1 1H11L7 6V11H5V6Z" fill="#5a8ad0"/></svg>
    </div>
  </section>

  <section class="panel right">
    <h3>Funktionssuche<svg><use href="#s-pin"/></svg><svg><use href="#s-x"/></svg></h3>
    <div class="search"><input type="text" placeholder="Suchen nach" aria-label="Suchen nach"><i class="arr dark"></i></div>
    <div class="box">
      <div class="tools"><svg><use href="#s-tree"/></svg><svg viewBox="0 0 12 12"><use href="#s-lvl"/><text x="6" y="11" font-size="8" font-weight="bold">2</text></svg><svg viewBox="0 0 12 12"><use href="#s-lvl"/><text x="6" y="11" font-size="8" font-weight="bold">3</text></svg><svg><use href="#s-tree"/></svg></div>
      <ul class="funcs"><li><b>anung</b></li><li></li><li></li><li>&nbsp;Skizze</li><li>erschnitt</li><li>randung</li><li></li><li><b>atalog</b></li></ul>
    </div>
    <div class="foot"><button>Bauwesen-Funktionen</button><button class="on">Funktionssuche</button></div>
  </section>

  <aside class="side"><button>Metall Konstruktion</button><button>Geometrie-Statistik</button><button>Blech-Kostenkalkulation</button></aside>
</main>

<div class="bottombar">
  <div class="cmd"><i class="grip"></i><input type="text" aria-label="Eingabe"></div>
  <div class="strip">
    <i class="grip"></i>
    <button class="wide" aria-label="Ebene"><svg viewBox="0 0 20 14"><path d="M5 2H18L15 10L2 12Z" fill="#eee" stroke="#222"/></svg></button><i class="arr"></i><i class="sep"></i>
    <button class="swatch" aria-label="Farbe"></button><i class="arr"></i>
    <select class="line" aria-label="Linienart"><option></option></select>
    <select class="num" aria-label="Stärke"><option>1</option></select>
    <button aria-label="Schraffur"><svg viewBox="0 0 14 14"><path d="M2 11L11 2M5 13L13 5" stroke="#222" stroke-width="1.500"/><path d="M1 3H6M1 6H5" stroke="#555"/></svg></button>
    <i class="grip"></i>
    <button aria-label="Hand"><svg viewBox="0 0 14 14"><path d="M3 1V7M1 3H6" stroke="#456"/><path d="M3 7H9V12H4Z" fill="#b9c0c6" stroke="#778"/><path d="M8 8L13 12" stroke="#b55"/></svg></button>
    <button aria-label="Achsen"><svg viewBox="0 0 14 14"><path d="M2 2V12L10 9M2 12L7 5" fill="none" stroke="#2a4a9a" stroke-width="1.100"/><path d="M12 2V6" stroke="#a33" stroke-width="2"/></svg></button>
    <button class="act" aria-label="Farbwürfel"><svg viewBox="0 0 14 14"><path d="M1 3L5 1V10L1 12Z" fill="#e33"/><path d="M5 1H13V9H5Z" fill="#3fd43a"/><path d="M1 12L5 9H13L9 13H2Z" fill="#5a6ae0"/></svg></button>
    <i class="gp"></i>
    <button aria-label="Punkte"><svg><use href="#b-dots"/></svg></button><button class="act" aria-label="Bemaßung"><svg><use href="#b-meas"/></svg></button><i class="sep"></i><button class="act" aria-label="Bemaßung 3D"><svg><use href="#b-meas2"/></svg></button><button aria-label="Neuberechnen"><svg><use href="#b-spiral"/></svg></button><i class="sep"></i>
    <button class="fr" aria-label="Prüfen"><svg class="pale"><use href="#b-meas2"/></svg></button><button class="fr" aria-label="Profil"><svg><use href="#b-zig"/></svg></button><button aria-label="Kreuz"><svg class="gn"><use href="#b-cross"/></svg></button><i class="grip"></i>
    <button class="fr"><svg><use href="#b-ctr"/></svg><em>J</em></button><button class="fr"><svg><use href="#b-diag"/></svg><em>I</em></button><button class="fr"><svg class="st"><use href="#b-cross"/></svg><em>S</em></button><button class="fr"><svg><use href="#b-mid"/></svg><em>N</em></button><button class="fr"><svg><use href="#b-diag"/></svg><em>T</em></button><button class="fr"><svg><use href="#b-ctr"/></svg><em>Z</em></button><button class="fr"><svg><use href="#b-perp"/></svg><em>F</em></button><button class="fr"><svg><use href="#b-ctr"/></svg><em>QP</em></button><button class="fr"><svg><use href="#b-v"/></svg><em>O</em></button><button class="fr"><svg><use href="#b-grid"/></svg><em>S2</em></button>
    <i class="sep"></i>
    <button aria-label="Aktualisieren"><svg viewBox="0 0 14 14"><path d="M5 2Q1 4 1.500 8Q3 13 7.500 12.500Q12.500 12 12.500 7Q12 3 8 2.500M5 5V1.500H1.500" fill="none" stroke="#1b6aa8" stroke-width="2"/></svg></button>
  </div>
</div>
<footer class="status"><span>Teil : Teil</span><span>Ansicht : Ansicht 1 1:1</span><span>Längeneinheit: mm</span><span>Maßstab : 1:1</span><span>Welt-KS</span><span>(X=2563.130, Y=14086.861, Z=21749.923)</span><span></span></footer>

<div class="dialog" role="dialog" aria-label="Teilestatistik">
  <div class="dtitle"><svg viewBox="0 0 12 12"><path d="M1 1H11V11H1Z" fill="#c8202c"/><path d="M1 9Q7 9 11 5V11H1Z" fill="#fff"/><path d="M3 4H7L9 6" stroke="#300" fill="none" stroke-width="1.500"/></svg><span>Teilestatistik</span><button aria-label="Schließen"><svg viewBox="0 0 8 8"><use href="#s-x"/></svg></button></div>
  <div class="grid">
    <div class="tablewrap">
      <table>
        <colgroup><col class="k0"><col><col class="k2"><col class="k3"><col class="k4"><col class="k5"><col class="k6"></colgroup>
        <thead><tr><th></th><th>Bezeichnung</th><th>Häufigkeit</th><th class="sorted">Punkte</th><th>Freiformpunkte</th><th>Besonderheit</th><th></th></tr></thead>
        <tbody id="rows"></tbody>
      </table>
    </div>
    <div class="vbar"><button class="t" aria-label="Hoch"></button><span class="thumb"></span><span class="gap"></span><button class="b" aria-label="Runter"></button></div>
  </div>
  <fieldset>
    <legend>Testausführung</legend>
    <div class="radios">
      <label><input type="radio" name="scope" checked>Ganze Konstruktion</label><label><input type="radio" name="grp">Keine Gruppierung</label>
      <label><input type="radio" name="scope">Aktives Teil</label><label><input type="radio" name="grp" checked>Gruppierung geometrisch gleicher Teile</label>
    </div>
    <div class="prog"><label for="pg">Fortschritt:</label><progress id="pg" value="0" max="100"></progress></div>
  </fieldset>
  <div class="actions"><button>Start</button><button>Schließen</button></div>
</div>
<script src="app.js"></script>
</body>
</html>
```

FILE: styles.css
```css
* { box-sizing: border-box; }
body { margin: 0; height: 100vh; display: flex; flex-direction: column; overflow: hidden; position: relative; background: #bfdbff; border-top: 2px solid #000; font: 8px/12px Roboto, "Open Sans", sans-serif; color: #222; text-rendering: geometricPrecision; }
button, input, select { font: inherit; color: inherit; margin: 0; padding: 0; border: 0; background: none; }
h1, h2, h3, ul { margin: 0; padding: 0; font: inherit; list-style: none; }
.defs { position: absolute; width: 0; height: 0; }
svg { display: block; flex: none; }
svg text { font-family: Roboto, sans-serif; }
svg .mono { font-family: "Liberation Mono", monospace; }
svg .serif { font-family: "Liberation Serif", serif; }
.arr { flex: none; width: 0; height: 0; border: 2px solid transparent; border-top-color: #5c7eb0; border-bottom: 0; }
.arr.dark { border-top-color: #111; }
.sep { flex: none; width: 1px; height: 14px; background: #9ebbe0; }
.grip { flex: none; width: 2px; height: 14px; border-left: 2px dotted #7d9cc8; }

/* title bar */
.titlebar { display: flex; align-items: center; height: 16px; background: #fff; flex: none; }
.appbtn { position: absolute; left: 2px; top: 0; width: 27px; height: 27px; border-radius: 50%; background: radial-gradient(#fff 30%, #dfe3ea 60%, #a9b0bd); border: 1px solid #9aa3b4; z-index: 2; }
.appbtn span { display: block; margin-left: -2px; width: 29px; height: 7px; background: linear-gradient(90deg, #1d4f8f 60%, #c9ced6 60%); color: #fff; font-size: 6px; line-height: 7px; font-weight: bold; text-align: left; padding-left: 2px; }
.quick { display: flex; align-items: center; height: 14px; margin-left: 30px; padding: 0 6px 0 3px; width: 148px; justify-content: space-between; border: 1px solid #c3c9d3; border-left: 0; border-radius: 0 8px 8px 0; background: #fbfcfe; }
.quick svg { width: 11px; height: 11px; }
.quick .sep { height: 10px; }
.quick + .arr { margin-left: 6px; }
.titlebar h1 { flex: 1; text-align: center; padding-left: 26px; color: #222; line-height: 14px; }
.winbtns { display: flex; width: 92px; justify-content: space-around; }
.winbtns svg { width: 9px; height: 9px; }

/* ribbon tabs */
.tabs { display: flex; height: 16px; flex: none; padding: 0 3px 0 33px; justify-content: space-between; color: #2a4a80; }
.tablist { display: flex; flex: 0 0 1162px; justify-content: space-between; }
.tablist button { padding: 0 8px; white-space: nowrap; }
.tablist .on { background: #f8fbff; border: 1px solid #9dbde6; border-width: 1px 1px 0; border-radius: 3px 3px 0 0; }
.tabtools { display: flex; align-items: center; gap: 3px; }
.tabtools svg { width: 10px; height: 10px; }

/* ribbon */
.ribbon { display: flex; gap: 2px; flex: none; height: 59px; padding: 1px 3px 2px; background: linear-gradient(#dbe7f5, #c5d8f0 30%, #cfe0f5 60%, #dfeefe); border: 1px solid #8fb4e3; border-width: 1px 1px 2px; border-radius: 3px; }
.group { display: flex; flex-direction: column; border: 1px solid #b4cce9; border-right-color: #eef5fd; border-radius: 2px; background: linear-gradient(#dde8f5, #c9daef 35%, #d0e1f6); }
.btns { display: flex; flex: 1; padding: 0 2px 0 1px; color: #1f3f7a; }
.btns button { position: relative; width: 28px; height: 42px; display: flex; flex-direction: column; align-items: center; line-height: 12px; gap: 2px; white-space: nowrap; }
.btns button.w2 { width: 34px; }
.btns button.w3 { width: 46px; }
.btns svg { width: 20px; height: 20px; overflow: visible; }
.btns button::before { content: "i"; position: absolute; left: calc(50% + 3px); top: 13px; width: 8px; height: 8px; border-radius: 50%; background: #2f50a5; border: 1px solid #6d86c4; color: #fff; font: bold 6px/6px "Liberation Serif", serif; text-align: center; z-index: 1; }
.btns .dd::after { content: ""; margin-top: -2px; border: 2px solid transparent; border-top-color: #5475a8; border-bottom: 0; }
.btns .sep { height: 37px; margin: 0 2px; }
.group h2 { text-align: center; height: 11px; line-height: 11px; background: #c0d6f1; color: #3d649f; }

/* main */
main { flex: 1; min-height: 0; display: flex; padding: 1px 0 1px 2px; }
.col { display: flex; flex-direction: column; }
.left { flex: 0 0 132px; min-width: 0; margin-right: 5px; }
.panel { display: flex; flex-direction: column; flex: 1 1 0; min-height: 0; min-width: 0; }
.left .panel:first-child { flex: 0 0 283px; margin-bottom: 2px; }
.panel.parts { flex: 0 0 196px; }
.panel h3 { display: flex; align-items: center; flex: none; height: 14px; padding: 0 3px 0 1px; gap: 4px; color: #1d4b94; background: #b2cdf0; }
.panel h3 svg { width: 7px; height: 7px; color: #3f5a86; }
.panel h3 svg:first-of-type { margin-left: auto; }
.box { flex: 1; min-height: 0; display: flex; flex-direction: column; background: #fff; border: 1px solid #8aa9d6; }
.tools { display: flex; align-items: center; justify-content: space-between; flex: none; height: 21px; padding: 0 3px; background: linear-gradient(#fff, #dfeafa 50%, #b9d1f4); }
.tools svg { width: 11px; height: 11px; }
.tools .dim { opacity: .4; }
.c1 { color: #8fc1e0; } .c2 { color: #d4deee; } .c3 { color: #ecc6cf; }
.more { width: 4px; height: 5px; margin-top: 9px; border-top: 1px solid #222; background: linear-gradient(135deg, #222 50%, transparent 50%); background-size: 4px 2px; background-repeat: no-repeat; background-position: 0 2px; }
.head { flex: none; height: 15px; line-height: 14px; padding-left: 6px; color: #1c1c72; background: linear-gradient(#fff, #fdeee0 50%, #fbe3cc); border-bottom: 1px solid #dcdcdc; }
.views { display: grid; grid-auto-rows: 1fr; height: 59px; margin-bottom: auto; }
.views li { display: flex; align-items: center; gap: 3px; padding-left: 5px; border-bottom: 1px solid #ddd; }
.views li svg { width: 11px; height: 10px; }
.views .sub { padding-left: 27px; }
.views b { font-weight: 500; color: #111; }
.views .u { border-bottom: 1px solid #333; line-height: 11px; }
.views .end { margin: 0 3px 0 auto; color: #fff; }
.views .blue { color: #6f9ee0; }
.exp { width: 5px; height: 5px; margin-right: 1px; background: linear-gradient(135deg, transparent 50%, #111 50%); }
.cur { color: #c8102e; text-decoration: underline; }
.foot { display: flex; flex: none; height: 16px; gap: 4px; color: #24488a; }
.foot button { display: flex; padding: 2px 3px 0; white-space: nowrap; }
.foot .on { background: #f4f9ff; box-shadow: inset 0 -1px #b9cde9, inset -1px 0 #b9cde9; border-radius: 0 0 2px 2px; }
.foot.tight { justify-content: space-between; gap: 0; padding-right: 6px; }

/* scroll bars */
.hbar { display: flex; flex: none; height: 12px; background: #f0f0f0; }
.hbar button, .vbar button { position: relative; flex: none; width: 12px; height: 12px; border: 1px solid #44597c; background: #e4eefb; }
.hbar .thumb { width: 70px; border: 1px solid #3d5478; background: linear-gradient(#f4f9ff, #bcd4f0); }
.hbar .r { margin-left: auto; }
.hbar button::after, .vbar button::after { content: ""; position: absolute; left: 3px; top: 3px; border: 2px solid transparent; }
.hbar .l::after { border-right-color: #111; left: 1px; }
.hbar .r::after { border-left-color: #111; left: 4px; }
.vbar .t::after { border-bottom-color: #111; top: 1px; }
.vbar .b::after { border-top-color: #111; top: 4px; }
.vbar { display: flex; flex-direction: column; flex: 0 0 12px; background: #f0f0f0; }
.vbar .thumb { height: 12px; border: 1px solid #5a7093; background: #d8e7fa; }
.vbar .gap { flex: 1; }

/* parts tree */
.scrollwrap { flex: 1; min-height: 0; display: flex; }
.listcol { flex: 1; min-width: 0; display: flex; flex-direction: column; }
.parts .vbar { margin-right: 1px; }
.parts .vbar .b { margin-top: 4px; }
.parts .hbar { margin-right: 13px; }
.parts .hbar .thumb { width: 80px; }
.tree, table { font-family: Lato, "Open Sans", sans-serif; }
.tree { flex: 1; min-height: 0; display: flex; flex-direction: column; overflow: hidden; }
.tree li { flex: 1; min-height: 0; display: flex; align-items: center; gap: 2px; padding-left: 57px; white-space: nowrap; overflow: hidden; border-bottom: 1px solid #e2e2e2; }
.tree li:last-child { flex: 0 0 3px; align-items: flex-start; border: 0; }
.tree li svg { width: 12px; height: 10px; }
.tree li svg + svg { width: 9px; height: 9px; }
.tree .sel { background: #d4e6fb; }

/* viewport */
.view { position: relative; flex: 1; min-width: 0; margin: 0 4px; border: 1px solid #444; border-top-width: 2px; overflow: hidden; background: linear-gradient(#c8daec, #e0e9f5 45%, #eef3fb 75%, #fff); }
.scene { position: absolute; left: 0; top: 0; width: 750px; height: 562px; }
.viewtools { position: relative; display: flex; gap: 4px; padding: 13px 0 0 115px; opacity: .45; }
.viewtools svg { width: 12px; height: 12px; color: #555; }
.viewtools i { width: 151px; } .viewtools i.s { width: 2px; } .viewtools i.m { width: 38px; }
.viewtools .red { color: #d33; } .viewtools .redf { color: #e66; } .viewtools .green { color: #9c9; } .viewtools .wh { color: #eee; } .viewtools .bl { color: #8fb0ee; } .viewtools .bl2 { color: #5f85c8; }

/* right */
.panel.right { flex: 0 0 169px; }
.search { display: flex; align-items: center; flex: none; height: 16px; margin: 2px 1px; padding-right: 3px; background: #fff; border: 1px solid #56698a; }
.search input { flex: 1; min-width: 0; text-align: center; outline: 0; }
.search input::placeholder { color: #777; font-style: italic; opacity: 1; }
.right .tools { justify-content: flex-start; gap: 5px; padding-left: 5px; height: 19px; }
.right .foot { gap: 2px; }
.funcs { display: grid; grid-auto-rows: 1fr; height: 107px; margin: 281px 0 0 122px; color: #333; }
.funcs b { color: #111; }
.side { display: flex; flex-direction: column; gap: 10px; flex: 0 0 14px; margin-left: 3px; padding-top: 2px; }
.side button { height: 86px; writing-mode: vertical-rl; text-align: left; background: linear-gradient(90deg, #ffefb0, #ffd56e); border: 1px solid #e9c878; border-right: 0; border-radius: 3px 0 0 3px; padding-top: 1px; line-height: 12px; color: #6c5c3c; white-space: nowrap; }
.side button:last-child { height: 108px; }

/* bottom toolbar and status */
.bottombar { display: flex; flex: none; height: 24px; border-bottom: 2px solid #5f95d8; }
.cmd { display: flex; align-items: center; gap: 4px; flex: 0 0 340px; padding: 0 2px 0 3px; background: linear-gradient(#dbe9fb, #b9d2f4); }
.cmd input { flex: 1; height: 11px; background: #fff; }
.strip { display: flex; align-items: center; flex: 0 0 666px; padding: 0 3px; justify-content: space-between; background: linear-gradient(#dfebfb, #b6d0f4); border-radius: 0 4px 4px 0; }
.strip button { position: relative; flex: none; width: 18px; height: 19px; display: grid; place-items: center; border: 1px solid transparent; }
.strip button.wide { width: 22px; }
.strip .wide svg { width: 20px; }
.strip svg { width: 14px; height: 14px; color: #544a35; }
.strip .act { background: #fcd28c; border-color: #c9a25f; }
.strip .fr { background: #c6d9f2; border-color: #8ba9d3; }
.strip .gn { color: #7fbf98; }
.strip .st { color: #8ba0c2; }
.strip .pale { opacity: .35; }
.strip em { position: absolute; right: 1px; top: 0; font: bold 7px/8px Roboto, sans-serif; color: #94a3bb; }
.strip button.swatch { background: #000; height: 12px; }
.strip select { height: 14px; background: #fff; appearance: none; padding-left: 4px; }
.strip .line { width: 95px; background: linear-gradient(#333, #333) 5px 7px / 78px 1px no-repeat, linear-gradient(90deg, #fff 88px, #cfe0f6 88px); }
.strip .num { width: 29px; background: linear-gradient(90deg, #fff 22px, #cfe0f6 22px); }
.gp { width: 1px; }
.status { display: flex; flex: none; height: 37px; padding: 0 0 0 2px; color: #2b4f8c; background: linear-gradient(#dbe9fb, #a9c8f2 8px, #bfdbff 14px); }
.status span { height: 11px; line-height: 11px; padding: 0 4px 0 3px; border-right: 1px solid #94b4df; white-space: nowrap; }

/* dialog */
.dialog { position: absolute; left: 669px; top: 147px; width: 549px; display: flex; flex-direction: column; background: #eef1fa; border: 1px solid #8d9099; box-shadow: 1px 2px 6px rgba(0, 0, 0, .5); }
.dtitle { display: flex; align-items: center; gap: 4px; height: 23px; padding: 0 5px 4px; background: #fff; color: #8b8b8b; }
.dtitle svg { width: 11px; height: 11px; }
.dtitle button { margin-left: auto; }
.dtitle button svg { width: 8px; height: 8px; }
.grid { display: flex; height: 377px; margin: 0 2px 0 3px; border: 1px solid #7f9bc2; background: #fff; }
.tablewrap { flex: 1; min-width: 0; overflow: hidden; }
.grid .vbar { padding-top: 15px; background: linear-gradient(#fff 15px, #ededed 15px); }
.grid .vbar .thumb { height: 8px; }
table { width: 100%; table-layout: fixed; border-collapse: collapse; }
.k0 { width: 12px; } .k2 { width: 42px; } .k3 { width: 33px; } .k4 { width: 62px; } .k5 { width: 53px; } .k6 { width: 15px; }
th, td { height: 16px; padding: 0 2px; font-weight: normal; text-align: left; line-height: 12px; white-space: nowrap; overflow: hidden; border: 1px solid #d4d4d4; border-width: 0 1px 1px 0; }
th { height: 15px; background: linear-gradient(#fff, #eee); color: #222; text-align: center; }
th:first-child { background: #cfe3fa; }
th:nth-child(2) { text-align: left; padding-left: 3px; }
th.sorted { background: linear-gradient(#fff, #d6e9fb); }
td:nth-child(1) { background: #f3f3f3; padding: 0 0 0 1px; }
td:nth-child(3), td:nth-child(4) { text-align: right; }
td:nth-child(4), td:nth-child(6) { padding: 0 1px; }
td svg { width: 11px; height: 10px; }
td:nth-child(7) { padding: 0 1px; }
.name { display: flex; align-items: center; gap: 4px; }
tr.sel td { background: #cfe5fc; }
fieldset { margin: 4px 2px 0 3px; padding: 0 5px 5px; min-width: 0; border: 1px solid #c4cbdc; border-top: 0; background: #d5ddec; }
legend { display: flex; align-items: center; gap: 3px; float: left; width: 100%; padding: 0; height: 15px; font-weight: bold; color: #111; }
legend::before, legend::after { content: ""; height: 1px; background: #444; width: 4px; }
legend::after { flex: 1; }
.radios { clear: both; display: grid; grid-template-columns: 83px 1fr; grid-auto-rows: 14px; }
.radios label { display: flex; align-items: center; gap: 2px; white-space: nowrap; }
.radios input { appearance: none; width: 9px; height: 9px; margin: 0; border: 1px solid #999; border-radius: 50%; background: #fff; }
.radios input:checked { background: radial-gradient(#1a2560 0 2px, #fff 3px); border-color: #667; }
.prog { display: flex; align-items: center; gap: 3px; height: 16px; }
progress { appearance: none; flex: 1; height: 15px; border: 1px solid #c3c3c3; background: #e3e3e3; }
progress::-webkit-progress-bar { background: #e3e3e3; }
.actions { display: flex; justify-content: flex-end; gap: 5px; padding: 3px 3px 4px; }
.actions button { width: 54px; height: 15px; border: 1px solid #50617e; background: linear-gradient(#f4f9ff, #c2d7f2 50%, #e6f0fd); color: #222; }
```

FILE: app.js
```js
const use = id => `<svg><use href="#${id}"/></svg>`;

const parts = [
  ['box', '031_PE_SF_1_Rahmenstock:D'], ['box', '031_PE_DF_1_Stahlzarge:DL_'], ['surf', 'Lampe_Skybar:Lampe_Skyb'],
  ['beam', 'Basiswand:Alucobontfassade'], ['box', 'Basiswand:Hilfswand_SKybar'], ['beam', 'Basiswand:Hilfswand_SKybar'],
  ['beam', 'Basiswand:Hilfswand_SKybar'], ['beam', 'Geschossdecke:FB_170_Holz'], ['beam', 'Geschossdecke:Alu Untersicht'],
  ['box', '031_PE_RR_DF_1:DL 1100x22'], ['beam', 'Basiswand:IW_T_DSW_200:1'], ['box', 'Geländer:03_Geländer Stahl'],
  ['box', 'Geländer:03_Geländer Stahl'], ['beam', 'Basiswand:STB_180:6478482'], ['beam', 'Basiswand:IW_T_DSW_200:6'],
  ['beam', 'Geschossdecke:STB_250:872'], ['beam', 'Basiswand:Alucobontfassade'], ['beam', 'Basiswand:STB_180:1147101'],
  ['beam', 'Basiswand:IC_MOE_MDF_OA'], ['beam', 'Basiswand:IC_MOE_MDF_So'], ['beam', 'Basiswand:IC_MOE_MDF_OA'],
  ['beam', 'Basiswand:IC_MOE_MDF_So'], ['beam', 'Basiswand:IW_T_100:142464'], ['beam', 'Basiswand:IC_MOE_MDF_So'],
  ['beam', 'Basiswand:IC_MOE_MDF_So'], ['beam', 'Basiswand:IW_T_VS_75:1584'], ['beam', 'Basiswand:IC_MOE_Streckm'],
  ['beam', 'Basiswand:IW_T_VS_50:1996'], ['beam', 'Basiswand:IW_T_150:647847'], ['beam', 'Basiswand:IW_T_150:649019'],
  ['beam', 'Basiswand:IW_T_100:826684'], ['box', 'Basiswand:STB_180:6478463'], ['beam', 'Basiswand:IW_T_150:900984'], ['box', '']
];
document.getElementById('tree').innerHTML = parts.map(([k, n]) => {
  const sel = k === 'surf';
  return `<li${sel ? ' class="sel"' : ''}>${use('s-' + k)}${use('s-eye')}${sel ? `<a href="#" class="cur">${n}</a>` : `<span>${n}</span>`}</li>`;
}).join('');

const F = 'Flächenkörper';
const stats = [
  ['surf', 'Lampe_Skybar:Lampe_Skybar:19213865 {}{0}', 1, 3028095, F],
  ['surf', 'ZI_Stehlampe:ZI_Stehlampe:19705967 {}{0}', 1, 321885, F],
  ['surf', 'Körper 17:Körper 17:12282636 {}{0}', 1, 299929, F],
  ['surf', 'Skybar_bench:Skybar_bench:14434664 {}{0}', 1, 243800, F],
  ['surf', 'Vorhang_3D:Vorhang_3D:17940060 {}{0}', 1, 220540, F],
  ['surf', 'Barstuhl:Barstuhl:14225146 {}{0}', 8, 109260, F],
  ['surf', 'Table_Floor_2.0:Table_Floor_2.0:19954195 {}{0}', 1, 52865, F],
  ['surf', '175_PE_Velux_Flachdachfenster:Rohbaumaß_900 x 1800:9189320 {}{0}', 1, 13734, F],
  ['surf', 'Washbasin bowl&nbsp; 420 x 420 x 150 -Laufen Pro-Laufen- 812962 (1):000 White:715737', 1, 9410, F],
  ['box', '031_PE_DF_2_Stahlzarge:DL 1450x2000_EI 2 30 C Elektroschacht:7222809 {}{0}', 1, 5859, ''],
  ['surf', '100_PE_Brausearmatur:100_PE_Brausearmatur:7020446 {}{0}', 5, 5294, F],
  ['surf', '100_PE_Brausearmatur:100_PE_Brausearmatur:6445036 {}{0}', 4, 5294, F],
  ['box', '100_PE_Alape_Schalenbecken_d=400:100_PE_Alape_Schalenbecken_d=400:6444514', 11, 4791, ''],
  ['box', '100_PE_Alape_Schalenbecken_d=400:100_PE_Alape_Schalenbecken_d=400:6580619', 9, 4791, ''],
  ['box', '031_PE_DF_1_Stahlzarge:DL_1000x2000 EI 2 30 C 2:7314015 {}{0}', 1, 4099, ''],
  ['box', 'Geschossdecken 3:Geschossdecken 3:19206658 {}{0}', 1, 3883, ''],
  ['box', 'Fensterverkleidung_5OG:Fensterverkleidung_5OG:19624957 {}{0}', 1, 3660, ''],
  ['box', 'Fensterverkleidung_5OG1:Fensterverkleidung_5OG:19659282 {}{0}', 1, 3660, ''],
  ['box', '031_PE_DF_1_Stahlzarge:DL_900x2000_EI2 30 C:6434189 {}{0}', 1, 3451, ''],
  ['box', '031_PE_DF_1_Stahlzarge:DL_900x2000_Zimmertür_EI2 30 C 2:6434154 {}{0}', 2, 3177, ''],
  ['box', '031_PE_DF_1_Stahlzarge:DL_600x1800_EI2 30 C 2:18445737 {}{0}', 1, 3177, ''],
  ['box', '031_PE_DF_1_Umfassungszarge_Profil 42:DL_1000x2000 2:10834197 {}{0}', 1, 3177, ''],
  ['box', '031_PE_DF_1_Stahlzarge:DL_900x2000 Zimmertür:6434165 {}{0}', 8, 3177, '']
];
document.getElementById('rows').innerHTML = stats.map(([k, n, h, p, b], i) =>
  `<tr${i ? '' : ' class="sel"'}><td>${i + 1}</td><td><div class="name">${use('s-' + k)}<span>${n}</span></div></td><td>${h}</td><td>${p}</td><td></td><td>${b}</td><td>${use('s-mag')}</td></tr>`
).join('');

/* Triangulated sphere seen along z, with its pole turned towards (px, py). */
function sphere(cx, cy, r, px, py) {
  const pz = Math.sqrt(1 - px * px - py * py);
  const l = Math.hypot(px, py);
  const u = [-py / l, px / l, 0];
  const v = [py * u[2] - pz * u[1], pz * u[0] - px * u[2], px * u[1] - py * u[0]];
  const at = (i, j) => {
    const t = i * Math.PI / 32, f = j * Math.PI / 32;
    const a = Math.sin(t) * Math.cos(f), b = Math.sin(t) * Math.sin(f), c = Math.cos(t);
    return [a * u[0] + b * v[0] + c * px, a * u[1] + b * v[1] + c * py, a * u[2] + b * v[2] + c * pz];
  };
  const seg = (p, q) => p[2] < 0 || q[2] < 0 ? '' :
    `M${(cx + r * p[0]).toFixed(1)} ${(cy + r * p[1]).toFixed(1)}L${(cx + r * q[0]).toFixed(1)} ${(cy + r * q[1]).toFixed(1)}`;
  let d = '';
  for (let i = 1; i < 31; i++) for (let j = 0; j < 64; j++) {
    const p = at(i, j);
    d += seg(p, at(i + 1, j)) + seg(p, at(i, j + 1)) + seg(p, at(i + 1, j + 1));
  }
  return d;
}
document.getElementById('mesh1').setAttribute('d', sphere(560, 301, 78, -0.78, 0.16));
document.getElementById('mesh2').setAttribute('d', sphere(662, 334, 78, -0.5, -0.7));

let neck = '';
for (let i = 0; i < 11; i++) neck += `M${626 + i * 3} ${251 + i / 3}Q${642 + i * 3} 285 ${632 + i * 2} ${322 - i}`;
for (let i = 0; i < 20; i++) neck += `M632 ${256 + i * 3}L${660 + Math.sin(i / 6) * 6} ${258 + i * 3}`;
document.getElementById('neck').setAttribute('d', neck);

let rods = '';
for (let i = 1; i < 9; i++) {
  rods += `<path d="M340 ${153 + i * 3}L${580 + i * 10} ${97 + i / 2}"/>`;
  if (i < 8) rods += `<path d="M340 ${216 + i * 2.6}L486 ${271 + i * 2.3}"/>`;
}
document.getElementById('rods').innerHTML = rods;
```
